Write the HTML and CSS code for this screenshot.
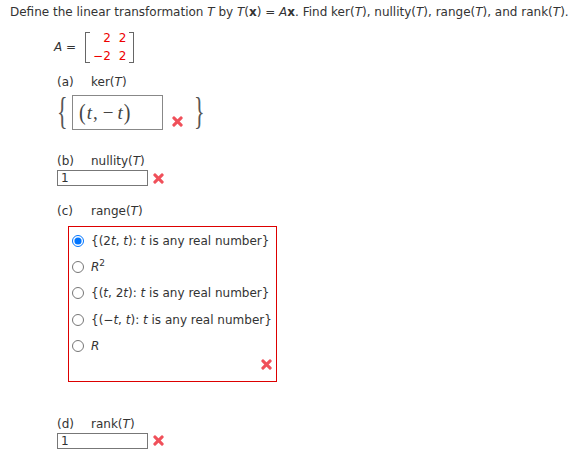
FILE: index.html
```html
<!DOCTYPE html>
<html lang="en">
<head>
    <meta charset="UTF-8">
    <title>Linear Transformation</title>
    <link rel="stylesheet" href="styles.css">
</head>
<body>

    <p class="question">Define the linear transformation <i>T</i> by <i>T</i>(<b>x</b>) = <i>A</i><b>x</b>. Find ker(<i>T</i>), nullity(<i>T</i>), range(<i>T</i>), and rank(<i>T</i>).</p>

    <div class="matrix-row">
        <span class="matrix-name"><i>A</i> =</span>
        <span class="bracket left"></span>
        <table class="matrix">
            <tr><td>2</td><td>2</td></tr>
            <tr><td>&minus;2</td><td>2</td></tr>
        </table>
        <span class="bracket right"></span>
    </div>

    <!-- (a) kernel -->
    <div class="part part-a">
        <div class="part-label"><span class="letter">(a)</span>ker(<i>T</i>)</div>
        <div class="set-row">
            <span class="brace">{</span>
            <div class="math-box"><span class="paren">(</span><i>t</i>,<span class="minus">&minus;</span><i>t</i><span class="paren">)</span></div>
            <span class="wrong big"></span>
            <span class="brace">}</span>
        </div>
    </div>

    <!-- (b) nullity -->
    <div class="part part-b">
        <div class="part-label"><span class="letter">(b)</span>nullity(<i>T</i>)</div>
        <div class="answer-row">
            <input type="text" class="answer" value="1">
            <span class="wrong"></span>
        </div>
    </div>

    <!-- (c) range -->
    <div class="part part-c">
        <div class="part-label"><span class="letter">(c)</span>range(<i>T</i>)</div>
        <div class="choices">
            <label class="choice"><input type="radio" name="range" checked><span>{(2<i>t</i>, <i>t</i>): <i>t</i> is any real number}</span></label>
            <label class="choice"><input type="radio" name="range"><span><i>R</i><sup>2</sup></span></label>
            <label class="choice"><input type="radio" name="range"><span>{(<i>t</i>, 2<i>t</i>): <i>t</i> is any real number}</span></label>
            <label class="choice"><input type="radio" name="range"><span>{(&minus;<i>t</i>, <i>t</i>): <i>t</i> is any real number}</span></label>
            <label class="choice"><input type="radio" name="range"><span><i>R</i></span></label>
            <div class="choices-foot"><span class="wrong"></span></div>
        </div>
    </div>

    <!-- (d) rank -->
    <div class="part part-d">
        <div class="part-label"><span class="letter">(d)</span>rank(<i>T</i>)</div>
        <div class="answer-row">
            <input type="text" class="answer" value="1">
            <span class="wrong"></span>
        </div>
    </div>

</body>
</html>
```

FILE: styles.css
```css
body {
    font-family: "DejaVu Sans", Verdana, sans-serif;
    font-size: 12px;
    color: #333;
    margin: 0;
    padding: 5px 10px;
}
.question {
    margin: 0;
    line-height: 15px;
}

/* matrix */
.matrix-row {
    display: flex;
    align-items: center;
    margin: 9px 0 0 44px;
}
.matrix-name {
    margin-right: 9px;
}
.bracket {
    width: 4px;
    height: 29px;
    border: 1px solid #666;
}
.bracket.left {
    border-right: none;
}
.bracket.right {
    border-left: none;
}
.matrix {
    border-collapse: collapse;
    color: #e00;
    margin: 0 3px 0 1px;
}
.matrix td {
    text-align: right;
    padding: 0 0 0 8px;
    line-height: 18px;
}
.matrix td:first-child {
    padding-left: 2px;
}

/* parts */
.part {
    margin-left: 47px;
}
.part-label {
    line-height: 15px;
    height: 15px;
}
.part-a .part-label { margin-top: 10px; }
.part-b .part-label { margin-top: 24px; }
.part-c .part-label { margin-top: 18px; }
.part-d .part-label { margin-top: 35px; }
.letter {
    display: inline-block;
    width: 34px;
}

/* kernel set */
.set-row {
    display: flex;
    align-items: center;
    height: 36px;
    margin-top: 4px;
}
.brace {
    font-family: "Liberation Serif", serif;
    font-size: 22px;
    color: #555;
    line-height: 36px;
    transform: scale(1, 1.75);
    width: 10px;
    text-align: center;
}
.math-box {
    box-sizing: border-box;
    width: 91px;
    height: 35px;
    border: 1px solid #888;
    margin-left: 5px;
    padding-left: 6px;
    font-family: "Liberation Serif", serif;
    font-size: 19px;
    line-height: 32px;
    color: #444;
}
.paren {
    display: inline-block;
    transform: scale(1, 1.15);
    font-size: 20px;
}
.math-box i {
    margin: 0 1px;
}
.minus {
    margin: 0 3px 0 5px;
}

/* wrong marks */
.wrong {
    display: inline-block;
    width: 11px;
    height: 11px;
    position: relative;
    margin-left: 5px;
}
.wrong::before, .wrong::after {
    content: "";
    position: absolute;
    left: -1px;
    top: 4px;
    width: 13px;
    height: 3px;
    border-radius: 1px;
    background: #f0505a;
    transform: rotate(45deg);
}
.wrong::after {
    transform: rotate(-45deg);
}
.wrong.big {
    align-self: flex-end;
    margin: 0 11px 3px 9px;
}

/* text answers */
.answer-row {
    display: flex;
    align-items: center;
    margin-top: 1px;
}
.answer {
    box-sizing: border-box;
    width: 91px;
    height: 16px;
    padding: 0 3px;
    margin: 0;
    border: 1px solid #777;
    font-family: inherit;
    font-size: 12px;
    color: #333;
}

/* range choices */
.choices {
    width: 209px;
    box-sizing: border-box;
    margin: 7px 0 0 11px;
    border: 1px solid #d00;
    padding: 1px 0 0 3px;
}
.choice {
    display: flex;
    align-items: center;
    height: 26.2px;
}
.choice input {
    margin: 0 7px 0 0;
    width: 12px;
    height: 12px;
}
.choice sup {
    font-size: 9px;
    line-height: 0;
}
.choices-foot {
    text-align: right;
    padding-right: 4px;
    height: 22px;
}
```
